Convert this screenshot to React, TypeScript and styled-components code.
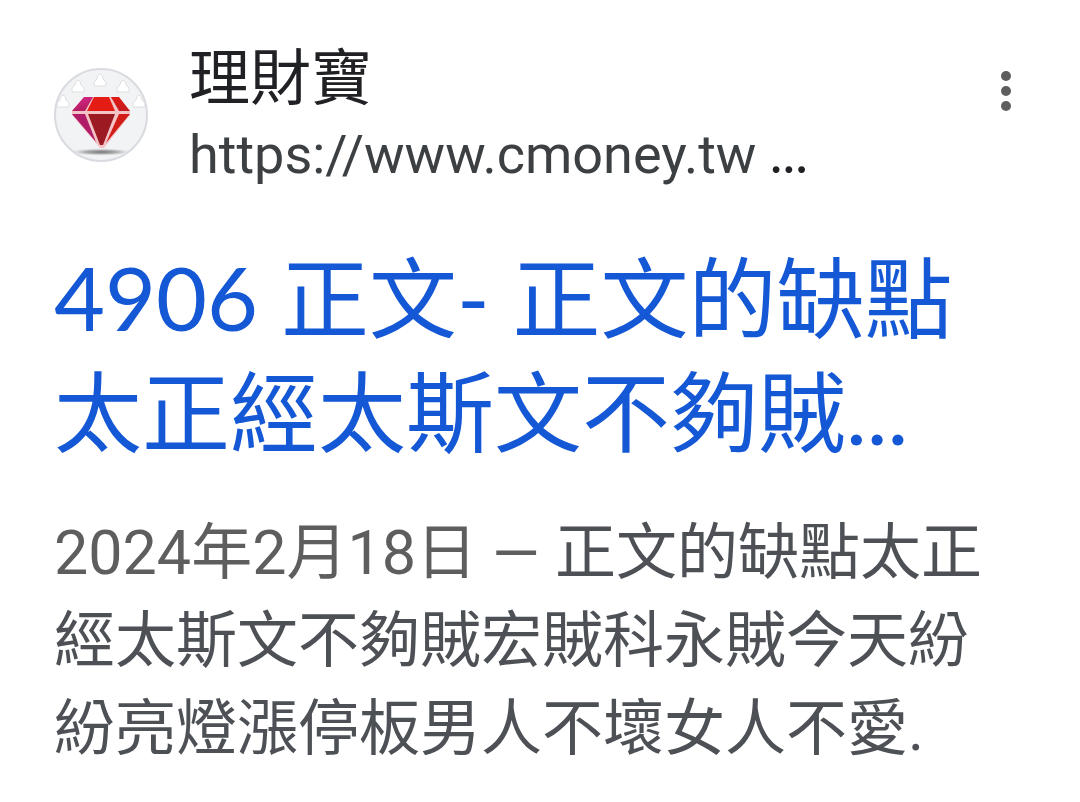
import React from "react";
import styled, { createGlobalStyle } from "styled-components";

const GlobalStyle = createGlobalStyle`
  body {
    margin: 0;
    background: #ffffff;
    font-family: Roboto, "Noto Sans CJK TC", sans-serif;
  }
`;

const Result = styled.article`
  padding: 36px 54px;
`;

const Header = styled.header`
  display: flex;
  align-items: center;
  gap: 41px;
`;

const Favicon = styled.svg`
  flex: none;
  width: 94px;
  height: 94px;
`;

const Source = styled.div`
  flex: 1;
  min-width: 0;
  padding-bottom: 6px;
`;

const SiteName = styled.div`
  color: #202124;
  font-size: 61px;
  line-height: 86px;
`;

const SiteUrl = styled.cite`
  display: block;
  color: #3c4043;
  font-size: 54px;
  font-style: normal;
  line-height: 66px;
`;

const Crumb = styled.span`
  color: #202124;
  font-family: Lato, sans-serif;
  line-height: 1;
`;

const MenuButton = styled.button`
  display: flex;
  justify-content: center;
  width: 40px;
  height: 48px;
  margin-bottom: 48px;
  padding: 0;
  border: 0;
  background: none;
  cursor: pointer;
`;

const Title = styled.h3`
  margin: 46px 0 0;
  font-family: "Open Sans", "Noto Sans CJK TC", sans-serif;
  font-size: 88px;
  font-weight: 400;
  line-height: 114px;
`;

const TitleLink = styled.a`
  color: #1558d6;
  text-decoration: none;
`;

const Rounded = styled.span`
  font-family: Lato, sans-serif;
  line-height: 1;
`;

const Snippet = styled.p`
  margin: 41px 0 0;
  color: #4d5156;
  font-size: 61px;
  line-height: 88px;
`;

const DateText = styled.span`
  color: #5e5e5e;
`;

const crownTops = [
  [9, 34],
  [24, 19],
  [46, 13],
  [69, 19],
  [85, 34],
];

function GemIcon() {
  return (
    <Favicon viewBox="0 0 94 94" aria-hidden="true">
      <defs>
        <clipPath id="disc">
          <circle cx="47" cy="47" r="45" />
        </clipPath>
        <radialGradient id="shadow">
          <stop offset="0" stopColor="#777777" />
          <stop offset="0.5" stopColor="#b4b4b4" />
          <stop offset="1" stopColor="#f1f3f4" stopOpacity="0" />
        </radialGradient>
        <linearGradient id="left" x1="0" y1="0" x2="0.4" y2="1">
          <stop offset="0" stopColor="#d62a8c" />
          <stop offset="1" stopColor="#b51b60" />
        </linearGradient>
        <linearGradient id="right" x1="0" y1="0" x2="0" y2="1">
          <stop offset="0" stopColor="#e01912" />
          <stop offset="1" stopColor="#c51c20" />
        </linearGradient>
      </defs>
      <circle cx="47" cy="47" r="46" fill="#f1f3f5" />
      <g clipPath="url(#disc)">
        {crownTops.map(([x, y]) => (
          <path
            key={x}
            d={`M${x} ${y - 7}q3 1 3 5l3 3v4h-12v-4l3-3q0-4 3-5z`}
            fill="#ffffff"
            stroke="#dddedf"
            strokeWidth="1"
          />
        ))}
        <ellipse cx="47" cy="84" rx="34" ry="4" fill="url(#shadow)" />
      </g>
      <path d="M30 29H64L76 43V47L50 80H46L18 47V43Z" fill="#f3c4c6" />
      <path d="M30 29H39L31 43H18Z" fill="url(#left)" />
      <path d="M18 46H31L42 74Z" fill="#b01c66" />
      <path d="M40 29H55L61 43H33Z" fill="#e41c14" />
      <path d="M57 29H65L76 43H65Z" fill="url(#right)" />
      <path d="M34 46H61L49 77H46Z" fill="#9c1b22" />
      <path d="M65 46H76L52 75Z" fill="#d21c18" />
      <circle cx="47" cy="47" r="46" fill="none" stroke="#d9dbe0" strokeWidth="2" />
    </Favicon>
  );
}

export default function App() {
  return (
    <>
      <GlobalStyle />
      <Result lang="zh-Hant">
        <Header>
          <GemIcon />
          <Source>
            <SiteName>理財寶</SiteName>
            <SiteUrl>
              https://www.cmoney.tw <Crumb>...</Crumb>
            </SiteUrl>
          </Source>
          <MenuButton type="button" aria-label="更多選項">
            <svg width="12" height="48" viewBox="0 0 12 48" fill="#5e5e5e">
              <circle cx="6" cy="9" r="5" />
              <circle cx="6" cy="24" r="5" />
              <circle cx="6" cy="39" r="5" />
            </svg>
          </MenuButton>
        </Header>
        <Title>
          <TitleLink href="https://www.cmoney.tw">
            <Rounded>4906</Rounded> 正文<Rounded>-</Rounded> 正文的缺點太正經太斯文不夠賊<Rounded>...</Rounded>
          </TitleLink>
        </Title>
        <Snippet>
          <DateText>2024年2月18日 — </DateText>
          正文的缺點太正經太斯文不夠賊宏賊科永賊今天紛紛亮燈漲停板男人不壞女人不愛.
        </Snippet>
      </Result>
    </>
  );
}
